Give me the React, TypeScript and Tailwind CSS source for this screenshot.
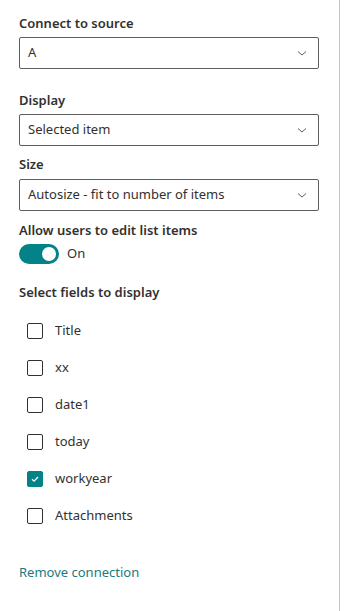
import React, { useState } from 'react';

const Label: React.FC<{ children: React.ReactNode; className?: string }> = ({ children, className }) => (
  <div className={`h-5 text-[13px] leading-5 font-semibold text-[#323130] ${className ?? ''}`}>{children}</div>
);

const Dropdown: React.FC<{ value: string; className?: string }> = ({ value, className }) => (
  <div
    className={`flex h-8 w-[300px] items-center justify-between rounded-[2px] border border-[#605e5c] bg-white pl-2 pr-[10px] ${className ?? ''}`}
  >
    <span className="text-[13px] text-[#323130]">{value}</span>
    <svg width="12" height="12" viewBox="0 0 12 12" fill="none">
      <path d="M2 4.5 L6 8 L10 4.5" stroke="#605e5c" strokeWidth="1" />
    </svg>
  </div>
);

const Checkbox: React.FC<{ label: string; checked: boolean; onToggle: () => void }> = ({ label, checked, onToggle }) => (
  <div className="flex h-[37px] cursor-pointer items-center pl-2" onClick={onToggle}>
    <div
      className={`flex h-4 w-4 items-center justify-center rounded-[2px] border ${
        checked ? 'border-[#038387] bg-[#038387]' : 'border-[#323130] bg-white'
      }`}
    >
      {checked && (
        <svg width="10" height="10" viewBox="0 0 10 10" fill="none">
          <path d="M2 5.2 L4.1 7.2 L8 3" stroke="white" strokeWidth="1.3" />
        </svg>
      )}
    </div>
    <span className="ml-3 text-[13px] text-[#323130]">{label}</span>
  </div>
);

const fields = ['Title', 'xx', 'date1', 'today', 'workyear', 'Attachments'];

const App: React.FC = () => {
  const [checked, setChecked] = useState<Record<string, boolean>>({ workyear: true });
  const [allowEdit, setAllowEdit] = useState(true);

  return (
    <div className="flex h-[611px] w-[355px] bg-white" style={{ fontFamily: '"Noto Sans", "Open Sans", sans-serif' }}>
      <div className="w-[339px] pl-[19px] pt-[13px]">
        <Label>Connect to source</Label>
        <Dropdown value="A" className="mt-1" />

        <Label className="mt-[21px]">Display</Label>
        <Dropdown value="Selected item" className="mt-1" />

        <Label className="mt-2">Size</Label>
        <Dropdown value="Autosize - fit to number of items" className="mt-[5px]" />

        <Label className="mt-[9px]">Allow users to edit list items</Label>
        <div className="mt-1 flex h-5 items-center">
          <button
            onClick={() => setAllowEdit(!allowEdit)}
            className={`flex h-5 w-10 items-center rounded-full px-[3px] ${
              allowEdit ? 'justify-end bg-[#038387]' : 'justify-start border border-[#323130] bg-white'
            }`}
          >
            <span className={`h-[14px] w-[14px] rounded-full ${allowEdit ? 'bg-white' : 'bg-[#323130]'}`} />
          </button>
          <span className="ml-2 text-[13px] text-[#323130]">{allowEdit ? 'On' : 'Off'}</span>
        </div>

        <Label className="mt-[18px]">Select fields to display</Label>
        <div className="mt-[10px]">
          {fields.map((f) => (
            <Checkbox
              key={f}
              label={f}
              checked={!!checked[f]}
              onToggle={() => setChecked({ ...checked, [f]: !checked[f] })}
            />
          ))}
        </div>

        <div className="mt-[28px] h-5 text-[13px] leading-5 text-[#1c7a7e]">Remove connection</div>
      </div>
      <div className="w-px bg-[#c8c6c4]" />
    </div>
  );
};

export default App;
